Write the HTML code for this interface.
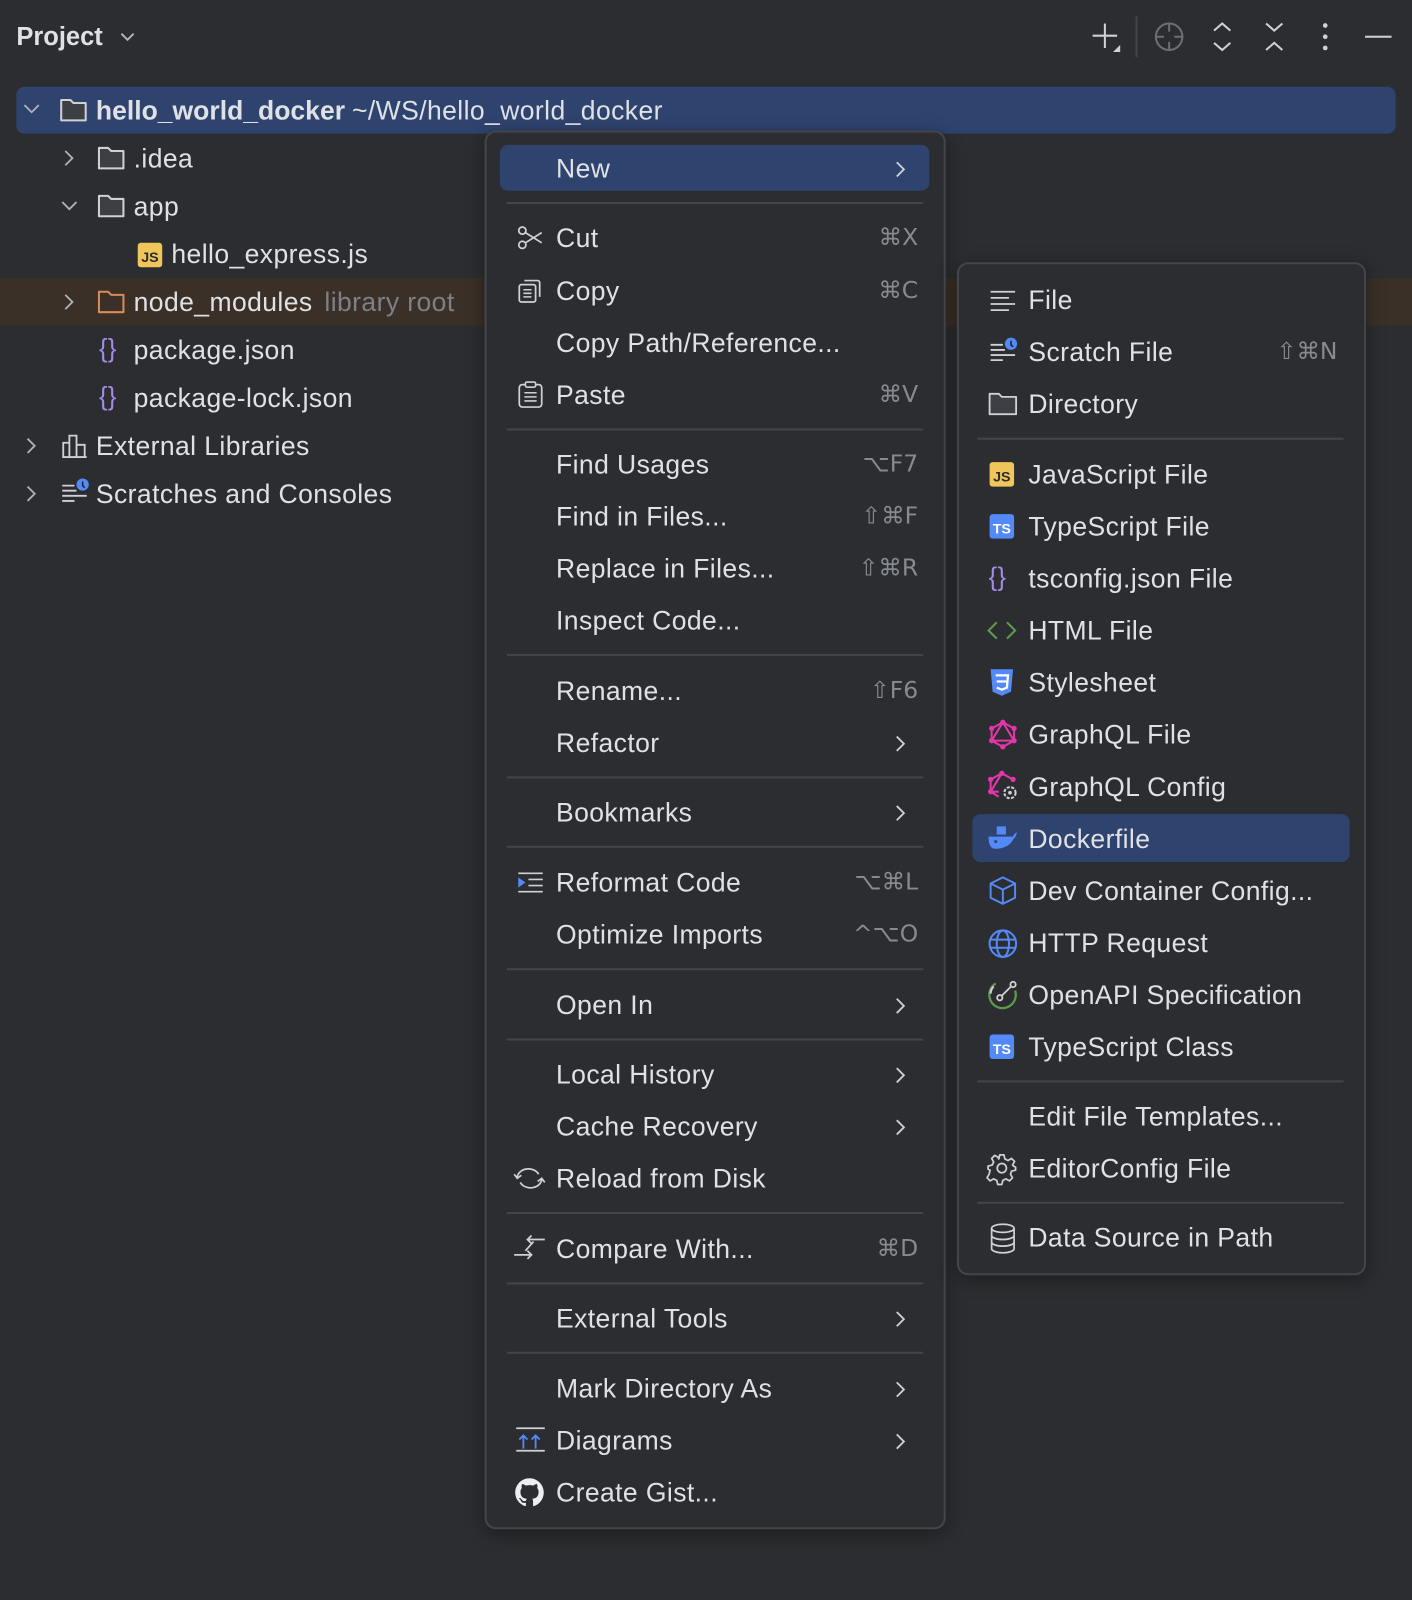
<!DOCTYPE html>
<html><head><meta charset="utf-8"><style>
html,body{margin:0;padding:0;background:#2b2d30;width:1412px;height:1600px;overflow:hidden}
#w{position:absolute;left:0;top:0;width:1384px;height:1568px;transform:scale(1.0202);transform-origin:0 0;font-family:"Liberation Sans","DejaVu Sans",sans-serif;color:#dfe1e5}
.t{position:absolute;font-size:26px;letter-spacing:.4px;line-height:30px;white-space:nowrap}
.k{position:absolute;font-size:23px;line-height:30px;white-space:nowrap;color:#868a91;font-family:"DejaVu Sans","Liberation Sans",sans-serif;text-align:right}
.mk{right:484px}
.sk{right:73px}
svg{position:absolute;overflow:visible}
.sep{position:absolute;height:2px;background:#43454a}
.ms{left:497px;width:408px}
.ss{left:958px;width:359px}
.menu{position:absolute;background:#2b2d30;border:2px solid #43454a;border-radius:11px;box-shadow:0 4px 18px rgba(0,0,0,.35)}
.hl{position:absolute;background:#2e436e;border-radius:8px}
</style></head><body><div id="w">

<div class="t" style="left:16px;top:21px;font-weight:bold;font-size:25px;letter-spacing:0">Project</div>
<svg style="left:117px;top:30px" width="16" height="12" viewBox="0 0 16 12"><path d="M2 3l6 6 6-6" fill="none" stroke="#b4b8bf" stroke-width="1.8"/></svg>
<svg style="left:1068px;top:20px" width="32" height="32" viewBox="0 0 32 32"><path d="M3 15h24M15 3v24" stroke="#cfd1d6" stroke-width="2" fill="none"/><path d="M30 24v7h-7z" fill="#cfd1d6"/></svg>
<div style="position:absolute;left:1113px;top:16px;width:2px;height:40px;background:#43454a"></div>
<svg style="left:1131px;top:21px" width="30" height="30" viewBox="0 0 30 30"><circle cx="15" cy="15" r="13" fill="none" stroke="#6b6e74" stroke-width="2"/><path d="M15 2v8M15 20v8M2 15h8M20 15h8" stroke="#6b6e74" stroke-width="2"/></svg>
<svg style="left:1187px;top:20px" width="22" height="32" viewBox="0 0 22 32"><path d="M3 10l8-7 8 7M3 22l8 7 8-7" fill="none" stroke="#cfd1d6" stroke-width="2"/></svg>
<svg style="left:1238px;top:20px" width="22" height="32" viewBox="0 0 22 32"><path d="M3 3l8 7 8-7M3 29l8-7 8 7" fill="none" stroke="#cfd1d6" stroke-width="2"/></svg>
<svg style="left:1294px;top:22px" width="10" height="30" viewBox="0 0 10 30"><circle cx="5" cy="3" r="2.3" fill="#cfd1d6"/><circle cx="5" cy="14" r="2.3" fill="#cfd1d6"/><circle cx="5" cy="25" r="2.3" fill="#cfd1d6"/></svg>
<div style="position:absolute;left:1338px;top:35px;width:26px;height:2px;background:#cfd1d6"></div>

<div class="hl" style="left:16px;top:85px;width:1352px;height:46px"></div>
<div style="position:absolute;left:0;top:273px;width:1384px;height:46px;background:#3a3027"></div>

<svg style="left:22px;top:101px" width="18" height="12"><path d="M2 2l7 7 7-7" fill="none" stroke="#aeb2b9" stroke-width="1.8"/></svg>
<svg style="left:58px;top:95px" width="28" height="26" viewBox="0 0 28 26"><path d="M2 3h9l3 3h12v17H2z" fill="#3c3f44" stroke="#cfd1d6" stroke-width="2" stroke-linejoin="round"/></svg>
<div class="t" style="left:94px;top:93px;font-weight:bold;letter-spacing:0">hello_world_docker</div>
<div class="t" style="left:345px;top:93px">~/WS/hello_world_docker</div>

<svg style="left:62px;top:146px" width="12" height="18"><path d="M2 2l7 7-7 7" fill="none" stroke="#aeb2b9" stroke-width="1.8"/></svg>
<svg style="left:95px;top:142px" width="28" height="26" viewBox="0 0 28 26"><path d="M2 3h9l3 3h12v17H2z" fill="#3c3f44" stroke="#cfd1d6" stroke-width="2" stroke-linejoin="round"/></svg>
<div class="t" style="left:131px;top:140px">.idea</div>

<svg style="left:59px;top:196px" width="18" height="12"><path d="M2 2l7 7 7-7" fill="none" stroke="#aeb2b9" stroke-width="1.8"/></svg>
<svg style="left:95px;top:189px" width="28" height="26" viewBox="0 0 28 26"><path d="M2 3h9l3 3h12v17H2z" fill="#3c3f44" stroke="#cfd1d6" stroke-width="2" stroke-linejoin="round"/></svg>
<div class="t" style="left:131px;top:187px">app</div>

<div style="position:absolute;left:135px;top:238px;width:24px;height:24px;background:#f0c65a;border-radius:3px;color:#2b2d30;font-size:14px;font-weight:bold;line-height:28px;text-align:center;font-family:'Liberation Sans',sans-serif">JS</div>
<div class="t" style="left:168px;top:234px">hello_express.js</div>

<svg style="left:62px;top:287px" width="12" height="18"><path d="M2 2l7 7-7 7" fill="none" stroke="#aeb2b9" stroke-width="1.8"/></svg>
<svg style="left:95px;top:283px" width="28" height="26" viewBox="0 0 28 26"><path d="M2 3h9l3 3h12v17H2z" fill="#3a3027" stroke="#d88a5c" stroke-width="2" stroke-linejoin="round"/></svg>
<div class="t" style="left:131px;top:281px">node_modules</div>
<div class="t" style="left:318px;top:281px;color:#7d8087">library root</div>

<div class="t" style="left:97px;top:327px;color:#a68ae8;font-size:25px">{}</div>
<div class="t" style="left:131px;top:328px">package.json</div>
<div class="t" style="left:97px;top:374px;color:#a68ae8;font-size:25px">{}</div>
<div class="t" style="left:131px;top:375px">package-lock.json</div>

<svg style="left:25px;top:428px" width="12" height="18"><path d="M2 2l7 7-7 7" fill="none" stroke="#aeb2b9" stroke-width="1.8"/></svg>
<svg style="left:60px;top:424px" width="26" height="26" viewBox="0 0 26 26"><path d="M2 24V10h6v14M8 24V3h7v21M15 24V12h8v12M1 24h24" fill="none" stroke="#cfd1d6" stroke-width="1.8"/></svg>
<div class="t" style="left:94px;top:422px">External Libraries</div>

<svg style="left:25px;top:475px" width="12" height="18"><path d="M2 2l7 7-7 7" fill="none" stroke="#aeb2b9" stroke-width="1.8"/></svg>
<svg style="left:60px;top:468px" width="30" height="28" viewBox="0 0 30 28"><path d="M1 8h12M1 13h14M1 18h24M1 23h12" stroke="#cfd1d6" stroke-width="1.8"/><circle cx="21" cy="7" r="6" fill="#548af7"/><path d="M21 4v4l2 2" stroke="#1e1f22" stroke-width="1.5" fill="none"/></svg>
<div class="t" style="left:94px;top:469px">Scratches and Consoles</div>

<div class="menu" style="left:475px;top:128px;width:448px;height:1367px"></div>
<div class="hl" style="left:490px;top:142px;width:421px;height:45px"></div>
<div class="t" style="left:545px;top:150px">New</div>

<div class="sep ms" style="top:198px"></div>
<div class="t" style="left:545px;top:218px">Cut</div><div class="k mk" style="top:218px">⌘X</div>
<div class="t" style="left:545px;top:270px">Copy</div><div class="k mk" style="top:270px">⌘C</div>
<div class="t" style="left:545px;top:321px">Copy Path/Reference...</div>
<div class="t" style="left:545px;top:372px">Paste</div><div class="k mk" style="top:372px">⌘V</div>
<div class="sep ms" style="top:420px"></div>
<div class="t" style="left:545px;top:440px">Find Usages</div><div class="k mk" style="top:440px">⌥F7</div>
<div class="t" style="left:545px;top:491px">Find in Files...</div><div class="k mk" style="top:491px">⇧⌘F</div>
<div class="t" style="left:545px;top:542px">Replace in Files...</div><div class="k mk" style="top:542px">⇧⌘R</div>
<div class="t" style="left:545px;top:593px">Inspect Code...</div>
<div class="sep ms" style="top:641px"></div>
<div class="t" style="left:545px;top:662px">Rename...</div><div class="k mk" style="top:662px">⇧F6</div>
<div class="t" style="left:545px;top:713px">Refactor</div>
<div class="sep ms" style="top:761px"></div>
<div class="t" style="left:545px;top:781px">Bookmarks</div>
<div class="sep ms" style="top:829px"></div>
<div class="t" style="left:545px;top:850px">Reformat Code</div><div class="k mk" style="top:850px">⌥⌘L</div>
<div class="t" style="left:545px;top:901px">Optimize Imports</div><div class="k mk" style="top:901px">^⌥O</div>
<div class="sep ms" style="top:949px"></div>
<div class="t" style="left:545px;top:970px">Open In</div>
<div class="sep ms" style="top:1018px"></div>
<div class="t" style="left:545px;top:1038px">Local History</div>
<div class="t" style="left:545px;top:1089px">Cache Recovery</div>
<div class="t" style="left:545px;top:1140px">Reload from Disk</div>
<div class="sep ms" style="top:1188px"></div>
<div class="t" style="left:545px;top:1209px">Compare With...</div><div class="k mk" style="top:1209px">⌘D</div>
<div class="sep ms" style="top:1257px"></div>
<div class="t" style="left:545px;top:1277px">External Tools</div>
<div class="sep ms" style="top:1325px"></div>
<div class="t" style="left:545px;top:1346px">Mark Directory As</div>
<div class="t" style="left:545px;top:1397px">Diagrams</div>
<div class="t" style="left:545px;top:1448px">Create Gist...</div>

<svg style="left:877px;top:157px" width="12" height="18"><path d="M2 2l7 7-7 7" fill="none" stroke="#cfd1d6" stroke-width="1.8"/></svg>
<svg style="left:877px;top:720px" width="12" height="18"><path d="M2 2l7 7-7 7" fill="none" stroke="#cfd1d6" stroke-width="1.8"/></svg>
<svg style="left:877px;top:788px" width="12" height="18"><path d="M2 2l7 7-7 7" fill="none" stroke="#cfd1d6" stroke-width="1.8"/></svg>
<svg style="left:877px;top:977px" width="12" height="18"><path d="M2 2l7 7-7 7" fill="none" stroke="#cfd1d6" stroke-width="1.8"/></svg>
<svg style="left:877px;top:1045px" width="12" height="18"><path d="M2 2l7 7-7 7" fill="none" stroke="#cfd1d6" stroke-width="1.8"/></svg>
<svg style="left:877px;top:1096px" width="12" height="18"><path d="M2 2l7 7-7 7" fill="none" stroke="#cfd1d6" stroke-width="1.8"/></svg>
<svg style="left:877px;top:1284px" width="12" height="18"><path d="M2 2l7 7-7 7" fill="none" stroke="#cfd1d6" stroke-width="1.8"/></svg>
<svg style="left:877px;top:1353px" width="12" height="18"><path d="M2 2l7 7-7 7" fill="none" stroke="#cfd1d6" stroke-width="1.8"/></svg>
<svg style="left:877px;top:1404px" width="12" height="18"><path d="M2 2l7 7-7 7" fill="none" stroke="#cfd1d6" stroke-width="1.8"/></svg>

<svg style="left:507px;top:221px" width="26" height="24" viewBox="0 0 26 24"><circle cx="5" cy="5" r="3.5" fill="none" stroke="#cfd1d6" stroke-width="1.7"/><circle cx="5" cy="19" r="3.5" fill="none" stroke="#cfd1d6" stroke-width="1.7"/><path d="M8 7l16 10M8 17l16-10" stroke="#cfd1d6" stroke-width="1.7"/></svg>
<svg style="left:507px;top:272px" width="26" height="26" viewBox="0 0 26 26"><path d="M7 3h13a2 2 0 0 1 2 2v14" fill="none" stroke="#cfd1d6" stroke-width="1.7"/><rect x="2" y="7" width="16" height="17" rx="2" fill="none" stroke="#cfd1d6" stroke-width="1.7"/><path d="M6 12h8M6 15.5h8M6 19h8" stroke="#cfd1d6" stroke-width="1.5"/></svg>
<svg style="left:507px;top:373px" width="26" height="28" viewBox="0 0 26 28"><rect x="2" y="4" width="22" height="22" rx="3" fill="none" stroke="#cfd1d6" stroke-width="1.7"/><rect x="8" y="1.5" width="10" height="5" rx="1.5" fill="#2b2d30" stroke="#cfd1d6" stroke-width="1.6"/><path d="M7 12h12M7 16h12M7 20h12" stroke="#cfd1d6" stroke-width="1.5"/></svg>
<svg style="left:507px;top:854px" width="26" height="22" viewBox="0 0 26 22"><path d="M1 2h24M11 8h14M11 14h14M1 20h24" stroke="#cfd1d6" stroke-width="1.6"/><path d="M1 6l7 5-7 5z" fill="#548af7"/></svg>
<svg style="left:503px;top:1142px" width="32" height="26" viewBox="0 0 32 26"><path d="M4 12a11 9 0 0 1 21-3M28 14a11 9 0 0 1-21 3" fill="none" stroke="#cfd1d6" stroke-width="1.7"/><path d="M1 9l3 4 4-3M31 17l-3-4-4 3" fill="none" stroke="#cfd1d6" stroke-width="1.7"/></svg>
<svg style="left:503px;top:1208px" width="32" height="30" viewBox="0 0 32 30"><path d="M14 7h17M18 3l-4 4 4 4M1 22h17M14 18l4 4-4 4M12 18l8-9" fill="none" stroke="#cfd1d6" stroke-width="1.7"/></svg>
<svg style="left:505px;top:1398px" width="30" height="26" viewBox="0 0 30 26"><path d="M1 2h28M1 24h28" stroke="#cfd1d6" stroke-width="1.7"/><path d="M8 22V9M4 13l4-4 4 4M20 22V9M16 13l4-4 4 4" fill="none" stroke="#548af7" stroke-width="1.8"/></svg>
<svg style="left:505px;top:1449px" width="28" height="28" viewBox="0 0 16 16"><path fill="#eceef1" d="M8 0C3.58 0 0 3.58 0 8c0 3.54 2.29 6.530 5.47 7.59.4.07.55-.17.55-.38 0-.19-.01-.82-.01-1.49-2.01.37-2.53-.49-2.69-.94-.09-.23-.48-.94-.82-1.130-.28-.15-.68-.52-.01-.53.63-.01 1.08.58 1.23.82.72 1.21 1.870.87 2.33.66.07-.52.28-.87.51-1.07-1.78-.2-3.64-.89-3.64-3.950 0-.87.31-1.59.82-2.15-.08-.2-.36-1.02.08-2.12 0 0 .67-.21 2.2.82.64-.18 1.32-.27 2-.27s1.36.09 2 .27c1.53-1.04 2.2-.82 2.2-.82.44 1.1.16 1.92.08 2.12.51.56.82 1.27.82 2.15 0 3.07-1.87 3.75-3.65 3.95.29.25.54.73.54 1.48 0 1.07-.01 1.93-.01 2.2 0 .21.15.46.55.38A8.013 8.013 0 0016 8c0-4.42-3.58-8-8-8z"/></svg>

<div class="menu" style="left:938px;top:257px;width:397px;height:989px"></div>
<div class="hl" style="left:953px;top:798px;width:370px;height:47px"></div>

<div class="t" style="left:1008px;top:279px">File</div>
<div class="t" style="left:1008px;top:330px">Scratch File</div><div class="k sk" style="top:330px">⇧⌘N</div>
<div class="t" style="left:1008px;top:381px">Directory</div>
<div class="sep ss" style="top:429px"></div>
<div class="t" style="left:1008px;top:450px">JavaScript File</div>
<div class="t" style="left:1008px;top:501px">TypeScript File</div>
<div class="t" style="left:1008px;top:552px">tsconfig.json File</div>
<div class="t" style="left:1008px;top:603px">HTML File</div>
<div class="t" style="left:1008px;top:654px">Stylesheet</div>
<div class="t" style="left:1008px;top:705px">GraphQL File</div>
<div class="t" style="left:1008px;top:756px">GraphQL Config</div>
<div class="t" style="left:1008px;top:807px">Dockerfile</div>
<div class="t" style="left:1008px;top:858px">Dev Container Config...</div>
<div class="t" style="left:1008px;top:909px">HTTP Request</div>
<div class="t" style="left:1008px;top:960px">OpenAPI Specification</div>
<div class="t" style="left:1008px;top:1011px">TypeScript Class</div>
<div class="sep ss" style="top:1059px"></div>
<div class="t" style="left:1008px;top:1079px">Edit File Templates...</div>
<div class="t" style="left:1008px;top:1130px">EditorConfig File</div>
<div class="sep ss" style="top:1178px"></div>
<div class="t" style="left:1008px;top:1198px">Data Source in Path</div>

<svg style="left:970px;top:284px" width="26" height="22" viewBox="0 0 26 22"><path d="M1 2h24M1 8h18M1 14h24M1 20h18" stroke="#cfd1d6" stroke-width="1.7"/></svg>
<svg style="left:970px;top:330px" width="30" height="28" viewBox="0 0 30 28"><path d="M1 8h12M1 13h14M1 18h24M1 23h12" stroke="#cfd1d6" stroke-width="1.8"/><circle cx="21" cy="7" r="6" fill="#548af7"/><path d="M21 4v4l2 2" stroke="#1e1f22" stroke-width="1.5" fill="none"/></svg>
<svg style="left:968px;top:383px" width="30" height="26" viewBox="0 0 30 26"><path d="M2 3h9l3 3h14v17H2z" fill="#3c3f44" stroke="#cfd1d6" stroke-width="1.8" stroke-linejoin="round"/></svg>
<div style="position:absolute;left:970px;top:453px;width:24px;height:24px;background:#f0c65a;border-radius:3px;color:#2b2d30;font-size:14px;font-weight:bold;line-height:28px;text-align:center">JS</div>
<div style="position:absolute;left:970px;top:504px;width:24px;height:24px;background:#548af7;border-radius:3px;color:#fff;font-size:14px;font-weight:bold;line-height:28px;text-align:center">TS</div>
<div class="t" style="left:969px;top:551px;color:#a68ae8;font-size:25px">{}</div>
<svg style="left:967px;top:607px" width="30" height="22" viewBox="0 0 30 22"><path d="M10 3L2 11l8 8M20 3l8 8-8 8" fill="none" stroke="#5f9b4c" stroke-width="2"/></svg>
<svg style="left:970px;top:655px" width="24" height="28" viewBox="0 0 24 28"><path d="M1 1h22l-2 22-9 4-9-4z" fill="#548af7"/><path d="M6 7h12l-1 12-5 2-5-2" fill="none" stroke="#fff" stroke-width="2.2"/><path d="M7 13h10" stroke="#fff" stroke-width="2.2"/></svg>
<svg style="left:968px;top:705px" width="30" height="30" viewBox="0 0 30 30"><path d="M15 3L4 9v12l11 6 11-6V9zM15 3L4 21h22z" fill="none" stroke="#e535ab" stroke-width="2"/><g fill="#e535ab"><circle cx="15" cy="3" r="2.6"/><circle cx="4" cy="9" r="2.6"/><circle cx="26" cy="9" r="2.6"/><circle cx="4" cy="21" r="2.6"/><circle cx="26" cy="21" r="2.6"/><circle cx="15" cy="27" r="2.6"/></g></svg>
<svg style="left:968px;top:755px" width="32" height="32" viewBox="0 0 32 32"><path d="M14 3L3 9v12l8 5M14 3l11 6M14 3L3 21h8" fill="none" stroke="#e535ab" stroke-width="2"/><g fill="#e535ab"><circle cx="14" cy="3" r="2.6"/><circle cx="3" cy="9" r="2.6"/><circle cx="25" cy="9" r="2.6"/><circle cx="3" cy="21" r="2.6"/></g><circle cx="22" cy="22" r="5.5" fill="none" stroke="#cfd1d6" stroke-width="2" stroke-dasharray="3 1.5"/><circle cx="22" cy="22" r="1.8" fill="#cfd1d6"/></svg>
<svg style="left:968px;top:809px" width="30" height="26" viewBox="0 0 30 26"><rect x="9" y="1" width="9" height="8" fill="#548af7"/><path d="M1 11h24c1-3 3-4 4-4-1 3-2 5-4 7-3 6-10 9-17 9-5 0-7-4-7-12z" fill="#548af7"/><circle cx="8" cy="16" r="1.5" fill="#2e436e"/></svg>
<svg style="left:968px;top:858px" width="30" height="30" viewBox="0 0 30 30"><path d="M15 2l12 6v14l-12 6-12-6V8zM3 8l12 6 12-6M15 14v14" fill="none" stroke="#548af7" stroke-width="1.9" stroke-linejoin="round"/></svg>
<svg style="left:968px;top:910px" width="30" height="30" viewBox="0 0 30 30"><circle cx="15" cy="15" r="13" fill="none" stroke="#548af7" stroke-width="2"/><ellipse cx="15" cy="15" rx="6" ry="13" fill="none" stroke="#548af7" stroke-width="2"/><path d="M2 11h26M2 19h26" stroke="#548af7" stroke-width="2"/></svg>
<svg style="left:968px;top:959px" width="32" height="32" viewBox="0 0 32 32"><path d="M8 5A13 13 0 1 0 27 12" fill="none" stroke="#5f9b4c" stroke-width="2.2"/><path d="M12 19l11-11" stroke="#cfd1d6" stroke-width="1.8"/><circle cx="12" cy="19" r="2.6" fill="#2b2d30" stroke="#cfd1d6" stroke-width="1.8"/><circle cx="25" cy="6" r="2.6" fill="#2b2d30" stroke="#cfd1d6" stroke-width="1.8"/><path d="M3 15a10 10 0 0 1 3-7" stroke="#cfd1d6" stroke-width="2"/></svg>
<div style="position:absolute;left:970px;top:1014px;width:24px;height:24px;background:#548af7;border-radius:3px;color:#fff;font-size:14px;font-weight:bold;line-height:28px;text-align:center">TS</div>
<svg style="left:968px;top:1131px" width="28" height="28" viewBox="0 0 28 28"><path d="M12 1h4l1 4 3 1.5 3.5-2 3 3-2 3.5L25.5 12l2 1v3l-4 1-1 3 2 3.5-3 3-3.5-2-3 1.5-1 4h-4l-1-4-3-1.5-3.5 2-3-3 2-3.5L2.5 16l-2-1v-3l4-1 1.5-3-2-3.5 3-3 3.5 2L11 5z" fill="none" stroke="#cfd1d6" stroke-width="1.7" stroke-linejoin="round"/><circle cx="14" cy="14" r="4.5" fill="none" stroke="#cfd1d6" stroke-width="1.7"/></svg>
<svg style="left:970px;top:1199px" width="26" height="30" viewBox="0 0 26 30"><ellipse cx="13" cy="5" rx="11" ry="4" fill="none" stroke="#cfd1d6" stroke-width="1.7"/><path d="M2 5v20c0 2 5 4 11 4s11-2 11-4V5M2 12c0 2 5 4 11 4s11-2 11-4M2 18.5c0 2 5 4 11 4s11-2 11-4" fill="none" stroke="#cfd1d6" stroke-width="1.7"/></svg>

</div></body></html>
